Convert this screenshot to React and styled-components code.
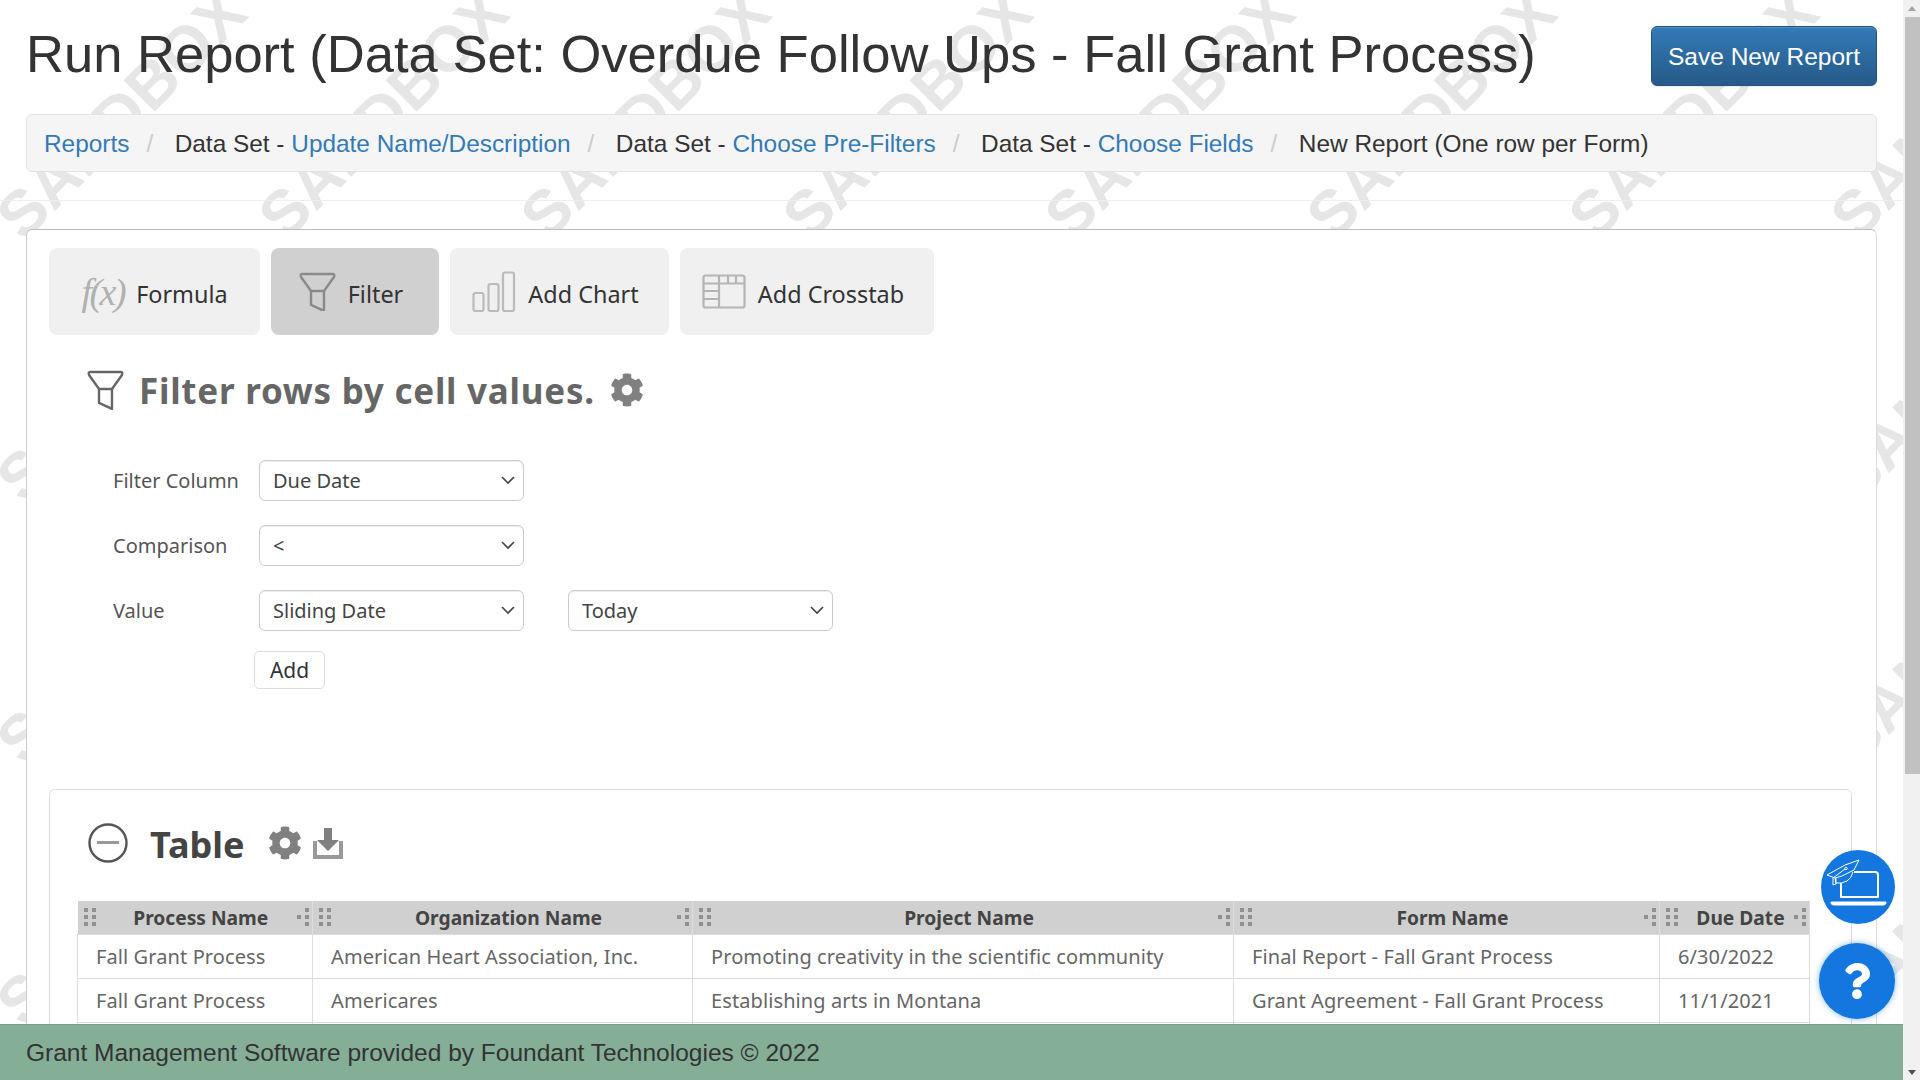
import React from 'react';
import styled, { createGlobalStyle } from 'styled-components';
import { FaCog, FaQuestion } from 'react-icons/fa';

const Global = createGlobalStyle`
  html, body { margin: 0; padding: 0; height: 100%; overflow: hidden; background: #fff; }
  * { box-sizing: border-box; }
`;

const UI = `"Noto Sans", "Open Sans", sans-serif`;
const AR = `"Liberation Sans", Arial, sans-serif`;
const CHEVRON = `url("data:image/svg+xml,%3Csvg xmlns='http://www.w3.org/2000/svg' width='14' height='9' viewBox='0 0 14 9' fill='none' stroke='%23444' stroke-width='1.6'%3E%3Cpath d='M1 1l6 6 6-6'/%3E%3C/svg%3E")`;

const Page = styled.div`position: relative; display: flex; height: 100vh; overflow: hidden; font-family: ${AR}; color: #333;`;
const Watermark = styled.div`
  position: absolute; left: -10px; top: -17px; display: grid;
  grid-template-columns: repeat(8, 262px); grid-auto-rows: 262px;
`;
const Stamp = styled.div`
  display: flex; align-items: center; justify-content: center;
  span { transform: rotate(-45deg); font: 700 64px ${AR}; color: #e6e6e6; white-space: nowrap; }
`;
const Main = styled.div`position: relative; z-index: 1; flex: 1; min-width: 0; display: flex; flex-direction: column;`;
const Scroll = styled.div`flex: 1; min-height: 0; overflow: hidden;`;
const Wrap = styled.div`padding: 0 26px;`;
const Header = styled.div`display: flex; justify-content: space-between; align-items: flex-start; height: 114px; padding-top: 26px;`;
const Title = styled.h1`margin: 0; font: 400 52.55px/56px ${AR}; color: #333; white-space: nowrap;`;
const SaveBtn = styled.button`
  width: 226px; height: 60px; border: 1px solid #245580; border-radius: 6px; color: #fff; padding: 2px 0 0 0;
  font: 400 24.5px ${AR}; background: linear-gradient(#337ab7, #265a88);
  box-shadow: inset 0 1px 0 rgba(255,255,255,.15), 0 1px 1px rgba(0,0,0,.075);
`;
const Crumbs = styled.nav`
  display: flex; align-items: center; height: 58px; padding: 1px 0 0 17px; background: #f5f5f5;
  border: 1px solid #e3e3e3; border-radius: 6px; font-size: 24.4px; color: #333; white-space: nowrap;
`;
const Link = styled.span`color: #337ab7;`;
const Sep = styled.span`color: #ccc; margin: 0 21.5px 0 17px;`;
const Rule = styled.hr`margin: 28px 0; border: 0; border-top: 1px solid #eee; height: 0;`;
const Panel = styled.section`
  background: #fff; border: 1px solid #ddd; border-top-color: #bbb; border-left-color: #ccc; border-radius: 6px;
  padding: 18px 24px 0 22px; height: 900px;
`;
const Tabs = styled.div`display: flex; gap: 11px;`;
const Tab = styled.div`
  display: flex; align-items: center; justify-content: center; gap: 12px;
  width: ${p => p.$w}px; height: 87px; border-radius: 8px; padding-right: ${p => p.$pr || 0}px;
  background: ${p => p.$active ? '#d0d0d0' : '#f0f0f0'};
  font: 400 23.4px ${UI}; color: #333;
`;
const TabText = styled.span`position: relative; top: 2px;`;
const Fx = styled.span`font: italic 400 38px "Liberation Serif", serif; color: #b0b0b0; letter-spacing: -2.5px;`;
const Heading = styled.div`display: flex; align-items: center; height: 74px; margin: 18px 0 0 38px; gap: 15px;`;
const HeadingText = styled.h2`margin: 0; font: 700 35px ${UI}; color: #666; letter-spacing: .75px;`;
const Gear = styled(FaCog)`color: #808080; width: ${p => p.$s}px; height: ${p => p.$s}px; flex: none;`;
const Form = styled.div`
  display: grid; grid-template-columns: 146px 265px 309px; row-gap: 24px;
  margin: 33px 0 0 64px; align-items: center; justify-content: start;
`;
const FormRow = styled.div`display: contents;`;
const Label = styled.label`font: 400 20px ${UI}; color: #555;`;
const Select = styled.select`
  width: 265px; height: 41px; border: 1px solid #ccc; border-radius: 6px;
  justify-self: end; appearance: none;
  background: #fff ${CHEVRON} no-repeat right 8px center;
  padding: 0 8px 0 13px; font: 400 20px ${UI}; color: #444;
  box-shadow: inset 0 1px 1px rgba(0,0,0,.075);
`;
const AddBtn = styled.button`
  grid-column: 2; justify-self: start; margin: -4px 0 0 -5px; width: 71px; height: 38px; background: #fff;
  border: 1px solid #ddd; border-radius: 5px; font: 400 21px ${UI}; color: #333; padding: 0;
`;
const Card = styled.div`
  margin-top: 100px; background: #fff; border: 1px solid #ddd; border-radius: 6px; padding: 0 0 0 27px; height: 400px;
`;
const CardHead = styled.div`display: flex; align-items: center; height: 111px; padding-bottom: 6px; margin-left: 11px;`;
const CardTitle = styled.h3`margin: 0 24px 0 22px; padding-top: 4px; font: 700 36px ${UI}; color: #444;`;
const IconGap = styled.span`width: 10px;`;
const Table = styled.table`border-collapse: collapse; table-layout: fixed; width: 1732px; font-family: ${UI};`;
const Th = styled.th`
  position: relative; height: 33px; padding: 0 0 0 12px; background: #d0d0d0; border-right: 1px solid #ddd;
  font: 700 19.2px ${UI}; color: #444; text-align: center; white-space: nowrap;
`;
const Td = styled.td`
  height: 44px; padding: 0 0 0 18px; border: 1px solid #ddd; font: 400 20px ${UI}; color: #666; white-space: nowrap; letter-spacing: .1px;
`;
const Handle = styled.svg`position: absolute; top: 7px; ${p => p.$right ? 'right: 3px;' : 'left: 6px;'}`;
const Footer = styled.footer`
  flex: none; height: 56px; display: flex; align-items: center; padding-left: 26px;
  background: #85ae97; border-top: 1px solid #7f9f8d; font: 400 24.5px ${AR}; color: #333; position: relative; z-index: 2;
`;
const Fab = styled.div`
  position: absolute; z-index: 3; display: flex; align-items: center; justify-content: center;
  right: 8px; top: ${p => p.$top}px; width: ${p => p.$s}px; height: ${p => p.$s}px; border-radius: 50%;
  background: #1477e0; color: #fff; box-shadow: ${p => p.$glow ? '0 0 6px rgba(20,119,224,.5)' : 'none'};
`;
const Bar = styled.aside`
  position: relative; z-index: 4; flex: none; width: 17px; background: #f1f1f1; display: flex; flex-direction: column;
`;
const Arrow = styled.div`
  height: 17px; display: flex; align-items: center; justify-content: center;
  &::after { content: ''; border: 4px solid transparent; ${p => p.$up ? 'border-bottom: 5px solid #a3a3a3; margin-top: -5px;' : 'border-top: 5px solid #505050; margin-top: 5px;'} }
`;
const Thumb = styled.div`height: 757px; margin-left: 2px; background: #c1c1c1;`;
const Spring = styled.div`flex: 1;`;

const FunnelIcon = ({ s = 37, c = '#8a8a8a' }) => (
  <svg width={s} height={s * 1.08} viewBox="0 0 37 40" fill="none" stroke={c} strokeWidth="2.4" strokeLinejoin="round">
    <path d="M3 2h31q2 0 1 3L25 19H12L2 5Q1 2 3 2z" />
    <path d="M12 19v14l13 6V19" />
  </svg>
);
const BarsIcon = () => (
  <svg width="44" height="42" viewBox="0 0 44 42" fill="none" stroke="#bbb" strokeWidth="2.2">
    <rect x="1.5" y="22" width="10" height="18" rx="2" />
    <rect x="16.5" y="13" width="10" height="27" rx="2" />
    <rect x="31" y="1.5" width="11" height="38.5" rx="2" />
  </svg>
);
const CrossIcon = () => (
  <svg width="44" height="35" viewBox="0 0 44 35" fill="none" stroke="#b5b5b5" strokeWidth="2.2">
    <rect x="1.5" y="1.5" width="41" height="32" rx="2" />
    <path d="M1.5 9.5h41M17 1.500v32M26 1.500v8M34 1.500v8M1.500 17h15.500M1.500 25h15.500" />
  </svg>
);
const MinusIcon = () => (
  <svg width="40" height="40" viewBox="0 0 40 40" fill="none">
    <circle cx="20" cy="20" r="18.5" stroke="#555" strokeWidth="2.4" />
    <path d="M9 19.5h22" stroke="#999" strokeWidth="3" />
  </svg>
);
const DownloadIcon = () => (
  <svg width="32" height="32" viewBox="0 0 32 32" fill="#808080">
    <path d="M12 1h8v12h7L16 24 5 13h7z" />
    <path d="M1 14h4v14h22V14h4v18H1z" fill="#999" />
  </svg>
);
const CapLaptopIcon = () => (
  <svg width="74" height="74" viewBox="0 0 74 74" fill="none" stroke="#fff" strokeLinejoin="round">
    <path d="M33 22h21q3 0 3 3v22H20V33" strokeWidth="2" />
    <path d="M10 52h55v1.500q-1 1.500-3 1.500H13q-2 0-3-1.500z" fill="#fff" strokeWidth="1" />
    <path d="M6 25 24 15 38 10 33 20 21 26 14 28z" strokeWidth="1" />
    <path d="M15 28v5q5 1 11-2 4-2 6-9M24 19l-12 9v7l3-1-1-6" strokeWidth="1" />
    <circle cx="25" cy="18.500" r="1.200" strokeWidth="1" />
  </svg>
);
const HandleLeft = () => (
  <Handle width="14" height="20" viewBox="0 0 14 20" fill="#909090">
    {[0, 7, 14].flatMap(y => [0, 8].map(x => <rect key={`${x}-${y}`} x={x} y={y} width="4" height="4" />))}
  </Handle>
);
const HandleRight = () => (
  <Handle $right width="12" height="20" viewBox="0 0 12 20" fill="#909090">
    {[0, 7, 14].map(y => <rect key={y} x="8" y={y} width="4" height="4" />)}
    <rect x="0" y="7" width="4" height="4" />
  </Handle>
);

const columns = [
  ['Process Name', 235], ['Organization Name', 380], ['Project Name', 541], ['Form Name', 426], ['Due Date', 150],
];
const rows = [
  ['Fall Grant Process', 'American Heart Association, Inc.', 'Promoting creativity in the scientific community', 'Final Report - Fall Grant Process', '6/30/2022'],
  ['Fall Grant Process', 'Americares', 'Establishing arts in Montana', 'Grant Agreement - Fall Grant Process', '11/1/2021'],
  ['', '', '', '', ''],
];

export default function App() {
  return (
    <Page>
      <Global />
      <Watermark>
        {Array.from({ length: 40 }, (_, i) => <Stamp key={i}><span>SANDBOX</span></Stamp>)}
      </Watermark>
      <Main>
        <Scroll>
          <Wrap>
            <Header>
              <Title>Run Report (Data Set: Overdue Follow Ups - Fall Grant Process)</Title>
              <SaveBtn>Save New Report</SaveBtn>
            </Header>
            <Crumbs>
              <Link>Reports</Link><Sep>/</Sep>
              Data Set -&nbsp;<Link>Update Name/Description</Link><Sep>/</Sep>
              Data Set -&nbsp;<Link>Choose Pre-Filters</Link><Sep>/</Sep>
              Data Set -&nbsp;<Link>Choose Fields</Link><Sep>/</Sep>
              New Report (One row per Form)
            </Crumbs>
          </Wrap>
          <Rule />
          <Wrap>
            <Panel>
              <Tabs>
                <Tab $w={211}><Fx>f(x)</Fx><TabText>Formula</TabText></Tab>
                <Tab $w={168} $pr={8} $active><FunnelIcon /><TabText>Filter</TabText></Tab>
                <Tab $w={219} $pr={8}><BarsIcon /><TabText>Add Chart</TabText></Tab>
                <Tab $w={254} $pr={8}><CrossIcon /><TabText>Add Crosstab</TabText></Tab>
              </Tabs>
              <Heading>
                <FunnelIcon c="#666" />
                <HeadingText>Filter rows by cell values.</HeadingText>
                <Gear $s={34} />
              </Heading>
              <Form>
                <FormRow>
                  <Label>Filter Column</Label>
                  <Select defaultValue="Due Date"><option>Due Date</option></Select>
                  <span />
                </FormRow>
                <FormRow>
                  <Label>Comparison</Label>
                  <Select defaultValue="<"><option>{'<'}</option></Select>
                  <span />
                </FormRow>
                <FormRow>
                  <Label>Value</Label>
                  <Select defaultValue="Sliding Date"><option>Sliding Date</option></Select>
                  <Select defaultValue="Today"><option>Today</option></Select>
                </FormRow>
                <AddBtn>Add</AddBtn>
              </Form>
              <Card>
                <CardHead>
                  <MinusIcon />
                  <CardTitle>Table</CardTitle>
                  <Gear $s={34} />
                  <IconGap />
                  <DownloadIcon />
                </CardHead>
                <Table>
                  <colgroup>{columns.map(([n, w]) => <col key={n} width={w} />)}</colgroup>
                  <thead>
                    <tr>
                      {columns.map(([n]) => <Th key={n}><HandleLeft />{n}<HandleRight /></Th>)}
                    </tr>
                  </thead>
                  <tbody>
                    {rows.map((r, i) => <tr key={i}>{r.map((c, j) => <Td key={j}>{c}</Td>)}</tr>)}
                  </tbody>
                </Table>
              </Card>
            </Panel>
          </Wrap>
        </Scroll>
        <Footer>Grant Management Software provided by Foundant Technologies © 2022</Footer>
        <Fab $top={850} $s={74}><CapLaptopIcon /></Fab>
        <Fab $top={943} $s={76} $glow><FaQuestion size={36} /></Fab>
      </Main>
      <Bar>
        <Arrow $up />
        <Thumb />
        <Spring />
        <Arrow />
      </Bar>
    </Page>
  );
}
